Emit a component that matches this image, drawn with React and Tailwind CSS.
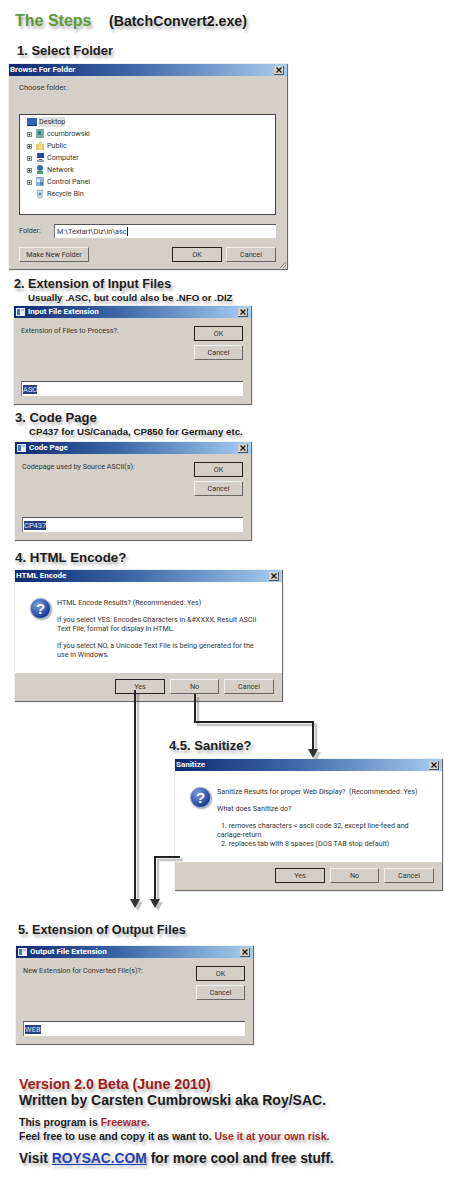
import React from 'react';

const SANS = 'font-["Liberation_Sans",Arial,sans-serif]';
const UI = 'font-["Roboto","Noto_Sans",sans-serif]';
const SHADOW = '[text-shadow:2px_3px_3px_rgba(0,0,0,0.3)]';

// ─── SMALL DRAWINGS ────────────────────────────────────────────────────────

function AppIcon() {
  return (
    <svg width="9" height="8" viewBox="0 0 9 8" className="mr-[3px] shrink-0">
      <rect width="9" height="8" fill="#e8eef6" />
      <rect x="1" y="1" width="3" height="6" fill="#3a7fb0" />
      <rect x="5" y="1" width="3" height="2" fill="#9cc0dc" />
    </svg>
  );
}

function CloseBox() {
  return (
    <div className="ml-auto mr-[3px] flex h-[9px] w-[10px] items-center justify-center border-r border-b border-[#555] bg-[#d4d0c8]">
      <svg width="6" height="6" viewBox="0 0 6 6">
        <path d="M0.5 0.5L5.5 5.5M5.5 0.5L0.5 5.5" stroke="#111" strokeWidth="1.2" />
      </svg>
    </div>
  );
}

function QuestionIcon() {
  return (
    <div className="flex h-[21px] w-[21px] shrink-0 items-center justify-center rounded-full border border-[#8d9cc0] bg-[radial-gradient(circle_at_35%_30%,#7d9fe0,#1d3f9c_70%)] shadow-[1px_1px_2px_rgba(0,0,0,0.4)]">
      <span className={`${SANS} text-[15px] leading-none font-bold text-white`}>?</span>
    </div>
  );
}

function PlusBox() {
  return (
    <svg width="5" height="5" viewBox="0 0 5 5" className="mr-[3px] shrink-0">
      <rect x="0.5" y="0.5" width="4" height="4" fill="#fff" stroke="#888" />
      <path d="M1.5 2.5H3.5M2.5 1.5V3.5" stroke="#222" />
    </svg>
  );
}

function TreeIcon({ kind }) {
  const shapes = {
    desktop: <><rect x="0" y="1" width="10" height="7" fill="#2f62b8" /><rect x="0" y="8" width="10" height="1" fill="#17346e" /></>,
    user: <><rect x="1" y="0" width="8" height="9" fill="#7fae9c" /><rect x="3" y="2" width="3" height="4" fill="#3e7f8e" /></>,
    folder: <><rect x="1" y="3" width="8" height="6" fill="#ecc75c" /><rect x="4" y="0" width="3" height="8" fill="#f3dc90" /></>,
    computer: <><rect x="2" y="0" width="7" height="5" fill="#1f4fa8" /><rect x="4" y="6" width="3" height="1" fill="#555" /><rect x="2" y="7" width="7" height="2" fill="#9aa7b8" /></>,
    network: <><circle cx="5" cy="3" r="3" fill="#2d6cb8" /><rect x="2" y="6" width="6" height="3" fill="#4f9a74" /></>,
    panel: <><rect x="1" y="0" width="8" height="9" fill="#8fb2dc" /><rect x="2" y="2" width="3" height="3" fill="#e6eef8" /><rect x="5" y="5" width="3" height="3" fill="#4c78b8" /></>,
    bin: <><path d="M2 1H8L7 9H3Z" fill="#cfe0ee" stroke="#7d9ab4" strokeWidth="0.6" /><circle cx="5" cy="5" r="1.5" fill="#4f8cc4" /></>,
  };
  return (
    <svg width="10" height="10" viewBox="0 0 10 10" className="mr-[2px] shrink-0">
      {shapes[kind]}
    </svg>
  );
}

// ─── DIALOG PARTS ──────────────────────────────────────────────────────────

function Titlebar({ title, icon }) {
  return (
    <div className="flex h-[12px] shrink-0 items-center bg-[linear-gradient(90deg,#0e2a72,#3f68a8_45%,#a9cdf0)] pl-[1px]">
      {icon && <span className="ml-[1px] flex"><AppIcon /></span>}
      <span className={`${UI} text-[8px] leading-none font-bold text-white`}>{title}</span>
      <CloseBox />
    </div>
  );
}

function Button({ label, def, className }) {
  const edge = def
    ? 'border border-[#222]'
    : 'border-r border-b border-[#666] border-t-[#f4f2ee] border-l-[#f4f2ee] border-t border-l';
  return (
    <div className={`${UI} ${edge} ${className} flex h-[15px] items-center justify-center bg-[#d4d0c8] text-[7.2px] leading-none text-[#333]`}>
      {label}
    </div>
  );
}

function Sunken({ className, children }) {
  return (
    <div className={`${className} flex items-center border-t border-l border-t-[#555] border-l-[#777] bg-white`}>
      {children}
    </div>
  );
}

function Frame({ className, children }) {
  return (
    <div className={`${className} flex flex-col border-r border-b border-[#6a6a6a] bg-[#d4d0c8] shadow-[0_0_1px_rgba(0,0,0,0.35)]`}>
      {children}
    </div>
  );
}

function InputDialog({ title, prompt, value, className }) {
  return (
    <Frame className={`${className} h-[99px]`}>
      <Titlebar title={title} icon />
      <div className="flex flex-1 flex-col pr-[8px] pl-[7px]">
        <div className="flex justify-between pt-[8px]">
          <span className={`${UI} -mt-[1px] text-[7.2px] leading-[12px] text-[#333]`}>{prompt}</span>
          <div className="flex w-[49px] flex-col gap-[4px]">
            <Button label="OK" def />
            <Button label="Cancel" />
          </div>
        </div>
        <Sunken className="mt-[21px] h-[15px] w-full pl-[1px]">
          <span className={`${UI} bg-[#2a3f8a] text-[7.5px] leading-[9px] text-[#dfe6f8]`}>{value}</span>
        </Sunken>
      </div>
    </Frame>
  );
}

function MessageDialog({ title, className, children }) {
  return (
    <Frame className={`${className} h-[132px]`}>
      <Titlebar title={title} />
      <div className="flex h-[91px] gap-[6px] bg-white pt-[16px] pl-[15px]">
        <QuestionIcon />
        <div className={`${UI} text-[7.2px] leading-[9px] text-[#333]`}>{children}</div>
      </div>
      <div className="flex justify-end gap-[5px] pt-[6px] pr-[8px]">
        <Button label="Yes" def className="w-[50px]" />
        <Button label="No" className="w-[49px]" />
        <Button label="Cancel" className="w-[50px]" />
      </div>
    </Frame>
  );
}

const TREE = [
  { name: 'ccumbrowski', kind: 'user', plus: true },
  { name: 'Public', kind: 'folder', plus: true },
  { name: 'Computer', kind: 'computer', plus: true },
  { name: 'Network', kind: 'network', plus: true },
  { name: 'Control Panel', kind: 'panel', plus: true },
  { name: 'Recycle Bin', kind: 'bin', plus: false },
];

function BrowseDialog() {
  return (
    <Frame className="ml-[9px] h-[206px] w-[279px]">
      <Titlebar title="Browse For Folder" />
      <div className="relative flex flex-1 flex-col pr-[11px] pl-[10px]">
        <div className={`${UI} mt-[6px] text-[7.5px] leading-[12px] text-[#333]`}>Choose folder.</div>
        <div className="mt-[20px] h-[101px] w-[257px] border border-[#444] bg-white pt-[1px] pl-[7px]">
          <div className="flex h-[12px] items-center">
            <TreeIcon kind="desktop" />
            <span className={`${UI} bg-[#e4e2de] text-[7.2px] leading-[10px] text-[#333]`}>Desktop</span>
          </div>
          {TREE.map(row => (
            <div key={row.name} className={`flex h-[12px] items-center ${row.plus ? '' : 'pl-[8px]'}`}>
              {row.plus && <PlusBox />}
              <TreeIcon kind={row.kind} />
              <span className={`${UI} text-[7.2px] leading-[10px] text-[#333]`}>{row.name}</span>
            </div>
          ))}
        </div>
        <div className="mt-[9px] flex h-[14px] items-center">
          <span className={`${UI} w-[35px] text-[7.2px] text-[#333]`}>Folder:</span>
          <Sunken className="h-[14px] flex-1 pl-[2px]">
            <span className={`${UI} text-[7.2px] leading-none text-[#333]`}>M:\Textart\Diz\in\asc</span>
            <span className="h-[9px] w-px bg-[#222]" />
          </Sunken>
        </div>
        <div className="mt-[9px] flex">
          <Button label="Make New Folder" className="w-[70px]" />
          <Button label="OK" def className="ml-auto w-[50px]" />
          <Button label="Cancel" className="ml-[4px] w-[50px]" />
        </div>
        <svg width="9" height="9" viewBox="0 0 9 9" className="absolute right-0 bottom-0">
          <path d="M8 2L2 8M8 5L5 8M8 7.5L7.5 8" stroke="#8a8880" />
        </svg>
      </div>
    </Frame>
  );
}

// ─── ARROWS ────────────────────────────────────────────────────────────────

function Arrows() {
  const lines = 'M135 690V900M195 694V722H313V750M180 857H155V900';
  const heads = 'M130 899H140L135 908ZM308 749H318L313 758ZM150 899H160L155 908Z';
  return (
    <svg width="474" height="1198" viewBox="0 0 474 1198" className="pointer-events-none absolute top-0 left-0">
      <g transform="translate(3 3)" opacity="0.28">
        <path d={lines} fill="none" stroke="#333" strokeWidth="2.5" />
        <path d={heads} fill="#333" />
      </g>
      <path d={lines} fill="none" stroke="#222" strokeWidth="2" />
      <path d={heads} fill="#333" />
    </svg>
  );
}

function Heading({ className, children }) {
  return <div className={`${SANS} ${SHADOW} font-bold whitespace-nowrap text-[#1c1c1c] ${className}`}>{children}</div>;
}

function SubHeading({ className, children }) {
  return <div className={`${SANS} ${SHADOW} text-[9.7px] leading-[12px] font-bold whitespace-nowrap text-[#1c1c1c] ${className}`}>{children}</div>;
}

export default function App() {
  return (
    <div className="relative h-[1198px] w-[474px] overflow-hidden bg-white pt-[11px]">
      <div className={`${SANS} ${SHADOW} flex h-[20px] items-center pl-[15px] leading-[20px] font-bold whitespace-nowrap`}>
        <span className="w-[94px] text-[16px] text-[#5c9a3c]">The Steps</span>
        <span className="text-[14.2px] text-[#1c1c1c]">(BatchConvert2.exe)</span>
      </div>

      <Heading className="mt-[11px] ml-[17px] text-[13px] leading-[18px]">1. Select Folder</Heading>
      <div className="mt-[4px]"><BrowseDialog /></div>

      <Heading className="mt-[6px] ml-[14px] text-[12.7px] leading-[16px]">2. Extension of Input Files</Heading>
      <SubHeading className="ml-[28px]">Usually .ASC, but could also be .NFO or .DIZ</SubHeading>
      <div className="mt-[2px]">
        <InputDialog title="Input File Extension" prompt="Extension of Files to Process?:" value="ASC" className="ml-[14px] w-[238px]" />
      </div>

      <Heading className="mt-[5px] ml-[15px] text-[13px] leading-[16px]">3. Code Page</Heading>
      <SubHeading className="ml-[29px]">CP437 for US/Canada, CP850 for Germany etc.</SubHeading>
      <div className="mt-[4px]">
        <InputDialog title="Code Page" prompt="Codepage used by Source ASCII(s):" value="CP437" className="ml-[15px] w-[237px]" />
      </div>

      <Heading className="mt-[8px] ml-[15px] text-[13.3px] leading-[18px]">4. HTML Encode?</Heading>
      <div className="mt-[3px]">
        <MessageDialog title="HTML Encode" className="ml-[15px] w-[268px]">
          <p>HTML Encode Results? (Recommended: Yes)</p>
          <p className="mt-[8px]">If you select YES: Encodes Characters in &amp;#XXXX, Result ASCII<br />Text File; format for display in HTML.</p>
          <p className="mt-[8px]">If you select NO, a Unicode Text File is being generated for the<br />use in Windows.</p>
        </MessageDialog>
      </div>

      <Heading className="mt-[35px] ml-[169px] text-[13px] leading-[18px]">4.5. Sanitize?</Heading>
      <div className="mt-[4px]">
        <MessageDialog title="Sanitize" className="ml-[175px] w-[268px]">
          <p>Sanitize Results for proper Web Display?&nbsp; (Recommended: Yes)</p>
          <p className="mt-[8px]">What does Sanitize do?</p>
          <p className="mt-[8px] indent-[4px]">1. removes characters &lt; ascii code 32, except line-feed and</p>
          <p>cariage-return</p>
          <p className="indent-[4px]">2. replaces tab with 8 spaces (DOS TAB stop default)</p>
        </MessageDialog>
      </div>

      <Heading className="mt-[30px] ml-[18px] text-[12.7px] leading-[18px]">5. Extension of Output Files</Heading>
      <div className="mt-[7px]">
        <InputDialog title="Output File Extension" prompt="New Extension for Converted File(s)?:" value="WEB" className="ml-[16px] w-[238px]" />
      </div>

      <div className={`${SANS} ${SHADOW} mt-[31px] ml-[19px] font-bold whitespace-nowrap text-[#1c1c1c]`}>
        <div className="text-[14.2px] leading-[16px] text-[#9c1c1c]">Version 2.0 Beta (June 2010)</div>
        <div className="text-[14px] leading-[16px]">Written by Carsten Cumbrowski aka Roy/SAC.</div>
        <div className="mt-[7px] text-[10.5px] leading-[14px]">This program is <span className="text-[#a82a2a]">Freeware.</span></div>
        <div className="text-[10.5px] leading-[14px]">Feel free to use and copy it as want to. <span className="text-[#a82a2a]">Use it at your own risk.</span></div>
        <div className="mt-[8px] text-[13.8px] leading-[16px]">Visit <span className="text-[#1f3fb8] underline">ROYSAC.COM</span> for more cool and free stuff.</div>
      </div>

      <Arrows />
    </div>
  );
}
